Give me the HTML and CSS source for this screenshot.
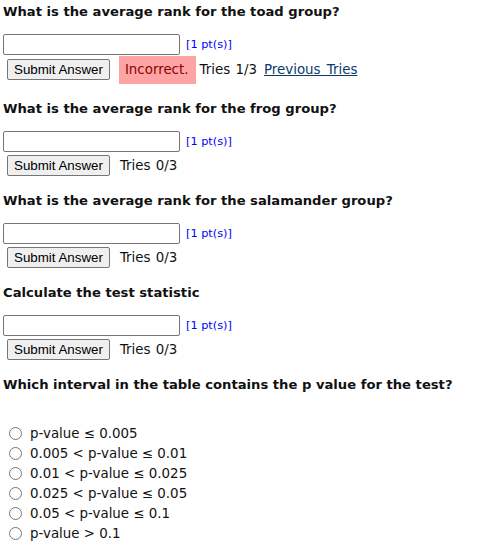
FILE: index.html
```html
<!DOCTYPE html>
<html>
<head>
<meta charset="utf-8">
<link rel="stylesheet" href="styles.css">
</head>
<body>
<div class="page">
  <div class="question">
    <div class="q-title">What is the average rank for the toad group?</div>
    <div class="input-row"><input class="answer" type="text"><span class="pts">[1 pt(s)]</span></div>
    <div class="answer-row status-row">
      <button class="submit">Submit Answer</button>
      <span class="incorrect">Incorrect.</span>
      <span class="tries tight">Tries 1/3</span>
      <a class="prev" href="#">Previous Tries</a>
    </div>
  </div>
  <div class="question">
    <div class="q-title">What is the average rank for the frog group?</div>
    <div class="input-row"><input class="answer" type="text"><span class="pts">[1 pt(s)]</span></div>
    <div class="answer-row">
      <button class="submit">Submit Answer</button>
      <span class="tries">Tries 0/3</span>
    </div>
  </div>
  <div class="question">
    <div class="q-title">What is the average rank for the salamander group?</div>
    <div class="input-row"><input class="answer" type="text"><span class="pts">[1 pt(s)]</span></div>
    <div class="answer-row">
      <button class="submit">Submit Answer</button>
      <span class="tries">Tries 0/3</span>
    </div>
  </div>
  <div class="question">
    <div class="q-title">Calculate the test statistic</div>
    <div class="input-row"><input class="answer" type="text"><span class="pts">[1 pt(s)]</span></div>
    <div class="answer-row">
      <button class="submit">Submit Answer</button>
      <span class="tries">Tries 0/3</span>
    </div>
  </div>
  <div class="question">
    <div class="q-title">Which interval in the table contains the p value for the test?</div>
    <div class="options">
      <label class="option"><input type="radio" name="pv"><span>p-value ≤ 0.005</span></label>
      <label class="option"><input type="radio" name="pv"><span>0.005 &lt; p-value ≤ 0.01</span></label>
      <label class="option"><input type="radio" name="pv"><span>0.01 &lt; p-value ≤ 0.025</span></label>
      <label class="option"><input type="radio" name="pv"><span>0.025 &lt; p-value ≤ 0.05</span></label>
      <label class="option"><input type="radio" name="pv"><span>0.05 &lt; p-value ≤ 0.1</span></label>
      <label class="option"><input type="radio" name="pv"><span>p-value &gt; 0.1</span></label>
    </div>
  </div>
</div>
</body>
</html>
```

FILE: styles.css
```css
html, body {
  margin: 0;
  padding: 0;
  background: #ffffff;
}
body {
  font-family: "DejaVu Sans", Verdana, sans-serif;
  font-size: 13.4px;
  color: #000000;
}
.page {
  padding: 3.5px 3px 0 3px;
}
.question {
  margin-bottom: 17px;
}
.q-title {
  font-weight: bold;
  font-size: 13.15px;
  line-height: 16px;
  color: #111111;
}
.input-row {
  display: flex;
  align-items: center;
  margin-top: 14px;
  height: 21px;
}
.answer {
  box-sizing: border-box;
  width: 177px;
  height: 21px;
  margin: 0;
  border: 1px solid #767676;
  border-radius: 2px;
  background: #ffffff;
  padding: 1px 2px;
}
.pts {
  margin-left: 6px;
  font-size: 11.3px;
  color: #0000ff;
}
.answer-row {
  display: flex;
  align-items: center;
  margin-top: 3px;
  min-height: 21px;
}
.status-row {
  margin-top: 1px;
}
.submit {
  box-sizing: border-box;
  height: 21px;
  margin: 0 0 0 4px;
  padding: 1px 6px;
  font-family: "Liberation Sans", Arial, sans-serif;
  font-size: 13.33px;
  color: #000000;
  background: #efefef;
  border: 1px solid #767676;
  border-radius: 2px;
}
.incorrect {
  margin-left: 9px;
  height: 28px;
  display: flex;
  align-items: center;
  padding: 0 7px 0 6px;
  background: #ffa4a4;
  color: #8b0000;
}
.tries {
  margin-left: 10px;
  color: #111111;
  word-spacing: 1px;
}
.tries.tight {
  margin-left: 4px;
}
.prev {
  margin-left: 7px;
  color: #0b3a6e;
  text-decoration: underline;
  word-spacing: 2px;
}
.options {
  margin-top: 31px;
  display: flex;
  flex-direction: column;
}
.option {
  display: flex;
  align-items: center;
  height: 20px;
  color: #111111;
}
.option input {
  margin: 0 0 0 6px;
  width: 13px;
  height: 13px;
}
.option span {
  margin-left: 8px;
}
```
